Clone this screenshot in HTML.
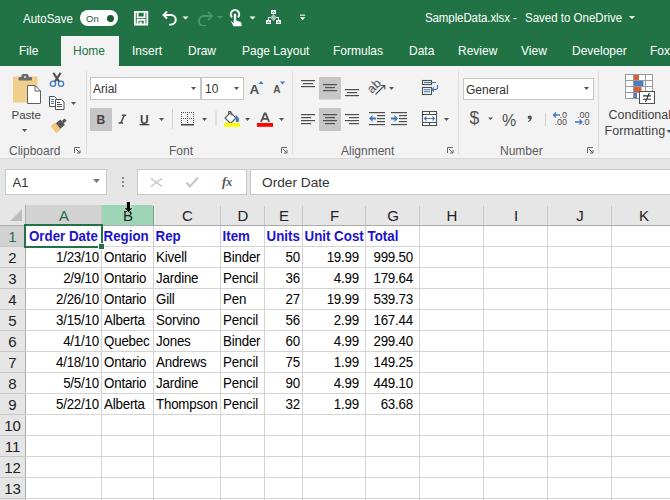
<!DOCTYPE html><html><head><meta charset="utf-8"><style>
*{margin:0;padding:0;box-sizing:border-box}
html,body{width:670px;height:500px;overflow:hidden;background:#fff;font-family:"Liberation Sans",sans-serif}
.a{position:absolute;white-space:nowrap}
#title{left:0;top:0;width:670px;height:66px;background:#217346}
.tw{color:#fff;font-size:12px;line-height:14px;transform:scaleY(1.1);transform-origin:0 3px}
.tab{color:#fff;font-size:12px;top:43px;line-height:14px;transform:scaleY(1.1);transform-origin:0 3px}
#ribbon{left:0;top:66px;width:670px;height:92px;background:#f3f3f3}
.rl{color:#5a5a5a;font-size:12px}
.cell{font-size:13.33px;color:#000;height:21px;line-height:21px;letter-spacing:-0.2px;transform:scaleY(1.1);transform-origin:0 4px}
.hdr{font-size:15px;color:#222;text-align:center}
</style></head><body>
<div id="title" class="a"></div>
<div class="a tw" style="left:23px;top:11px;font-size:11.5px">AutoSave</div>
<div class="a" style="left:80px;top:10px;width:38px;height:16px;border-radius:8px;background:#fff"></div>
<div class="a" style="left:86px;top:13px;font-size:9.5px;line-height:11px;color:#1d5a39">On</div>
<div class="a" style="left:107px;top:15px;width:7px;height:7px;border-radius:50%;background:#1d5a39"></div>
<svg class="a" style="left:134px;top:11px" width="15" height="15" viewBox="0 0 15 15"><path d="M0.9 0.9h12.4v12.6H0.9z M3.6 0.9v5.4h7V0.9 M3.6 13.5V8.8h7v4.7" fill="none" stroke="#fff" stroke-width="1.8"/><rect x="5.6" y="10.6" width="2.2" height="3" fill="#fff"/></svg>
<svg class="a" style="left:162px;top:10px" width="16" height="16" viewBox="0 0 16 16"><path d="M5 1.5L1.5 5 5 8.5 M1.8 5h7.2a4.8 4.8 0 0 1 0 9.6H7" fill="none" stroke="#fff" stroke-width="1.9"/></svg>
<svg class="a" style="left:182px;top:15px" width="7" height="5"><path d="M0.5 1.5h6L3.5 4.5z" fill="#fff"/></svg>
<svg class="a" style="left:196px;top:9px" width="18" height="17" viewBox="0 0 18 17"><path d="M12 3l4 4-4 4 M16 7H8a5 5 0 0 0 0 10h2" fill="none" stroke="#4e9670" stroke-width="1.8"/></svg>
<svg class="a" style="left:217px;top:15px" width="7" height="5"><path d="M0 1h6L3 4z" fill="#4e9670"/></svg>
<svg class="a" style="left:229px;top:8px" width="14" height="20" viewBox="0 0 14 20"><path d="M3 9.2A4.2 4.2 0 1 1 9 9.2" fill="none" stroke="#fff" stroke-width="2"/><rect x="4.8" y="5.8" width="2.4" height="8" fill="#fff"/><path d="M1.5 12.8L4.8 15.2V12.5h2.4l4.3 1.5q1 0.5 1 1.5V18.2H4.6z" fill="#fff"/></svg>
<svg class="a" style="left:249px;top:15px" width="7" height="5"><path d="M0.5 1.5h6L3.5 4.5z" fill="#fff"/></svg>
<svg class="a" style="left:265px;top:9px" width="17" height="16" viewBox="265 9 17 16"><rect x="271" y="10" width="5" height="4" fill="#fff"/><rect x="266" y="20" width="5" height="4" fill="#fff"/><rect x="276" y="20" width="5" height="4" fill="#fff"/><path d="M272.3 13l1.2-1.4 1.2 1.4 M267.3 23l1.2-1.4 1.2 1.4 M277.3 23l1.2-1.4 1.2 1.4" stroke="#217346" stroke-width="0.9" fill="none"/><path d="M273.5 14l3.2 3.6-3.2 3.6-3.2-3.6z" fill="#fff" fill-opacity="0.6"/><path d="M268.5 20v-2.5h2.2 M278.5 20v-2.5h-2.2" stroke="#fff" stroke-width="1" fill="none"/></svg>
<svg class="a" style="left:299px;top:14px" width="8" height="8" viewBox="299 14 8 8"><rect x="300" y="14.6" width="5.2" height="1.1" fill="#fff"/><path d="M300 17.2h5.2l-2.6 3z" fill="#fff"/></svg>
<div class="a tw" style="left:425px;top:10px;font-size:11.5px;letter-spacing:-0.1px">SampleData.xlsx</div>
<div class="a tw" style="left:513px;top:10px;font-size:11.5px">-</div>
<div class="a tw" style="left:525px;top:10px;font-size:11.5px">Saved to OneDrive</div>
<svg class="a" style="left:629px;top:16px" width="6" height="4"><path d="M0 0h6L3 3z" fill="#fff"/></svg>
<div class="a" style="left:61px;top:36px;width:58px;height:30px;background:#f3f3f3"></div>
<div class="a tab" style="left:19px;color:#fff">File</div>
<div class="a tab" style="left:73px;color:#217346">Home</div>
<div class="a tab" style="left:132px;color:#fff">Insert</div>
<div class="a tab" style="left:188px;color:#fff">Draw</div>
<div class="a tab" style="left:242px;color:#fff">Page Layout</div>
<div class="a tab" style="left:333px;color:#fff">Formulas</div>
<div class="a tab" style="left:409px;color:#fff">Data</div>
<div class="a tab" style="left:458px;color:#fff">Review</div>
<div class="a tab" style="left:521px;color:#fff">View</div>
<div class="a tab" style="left:572px;color:#fff">Developer</div>
<div class="a tab" style="left:650px;color:#fff">Fox</div>
<div id="ribbon" class="a"></div>
<svg class="a" style="left:0;top:0" width="670" height="500" viewBox="0 0 670 500"><rect x="13" y="76.5" width="24.5" height="26" fill="#f0cf8c"/><rect x="18.5" y="77" width="13.5" height="3.5" rx="1" fill="#6b6b6b"/><path d="M21.5 77.5v-2a1.5 1.5 0 0 1 1.5-1.5h4a1.5 1.5 0 0 1 1.5 1.5v2z" fill="#6b6b6b"/><circle cx="25" cy="77" r="1" fill="#f3f3f3"/><path d="M27.5 85.5h7.5l5.5 5.5v12.5h-13z" fill="#fff" stroke="#606060" stroke-width="1"/><path d="M35 85.5v5.5h5.5" fill="none" stroke="#606060" stroke-width="1"/><path d="M53.3 72.8l5.8 8.8 M60.7 72.8l-5.8 8.8" stroke="#505050" stroke-width="2.1" fill="none"/><circle cx="53" cy="83.8" r="2.6" fill="none" stroke="#3f78c0" stroke-width="1.3"/><circle cx="61" cy="83.8" r="2.6" fill="none" stroke="#3f78c0" stroke-width="1.3"/><path d="M49.5 96.5h5l2 2v8h-7z" fill="#fff" stroke="#505050" stroke-width="1"/><path d="M51 99.5h3 M51 101.5h3 M51 103.5h3" stroke="#3f78c0" stroke-width="1"/><path d="M55.5 99.5h6l2.5 2.5v7.5h-8.5z" fill="#fff" stroke="#505050" stroke-width="1"/><path d="M57 102.5h3 M57 104.5h5 M57 106.5h5" stroke="#505050" stroke-width="1"/><path d="M71 102h5l-2.5 3z" fill="#555"/><g transform="translate(57.3 126.6) rotate(-40)"><rect x="-5" y="-4.5" width="6" height="9" fill="#f0c878"/><rect x="1" y="-3.5" width="6" height="7" fill="#555"/><rect x="7" y="-1.5" width="4" height="3" fill="#555"/></g><path d="M22 129h5l-2.5 3z" fill="#555"/><rect x="90.5" y="77.5" width="110" height="22" fill="#fff" stroke="#c6c6c6"/><rect x="201.5" y="77.5" width="42" height="22" fill="#fff" stroke="#c6c6c6"/><path d="M191 87h5l-2.5 3z M234 87h5l-2.5 3z" fill="#555"/><path d="M258.5 84h5l-2.5-3z" fill="#3f78c0"/><path d="M280 81.5h5l-2.5 3z" fill="#3f78c0"/><rect x="90" y="108" width="22" height="23" fill="#c6c6c6"/><path d="M159 118h5l-2.5 3z M202 118h5l-2.5 3z M245 118h5l-2.5 3z M279 118h5l-2.5 3z" fill="#555"/><rect x="139.5" y="124" width="10" height="1.3" fill="#444"/><path d="M121.8 115.2h4.4 M118.6 122.9h4.4 M124.3 115.2l-3.4 7.7" stroke="#4a4a4a" stroke-width="1.5" fill="none"/><rect x="172" y="109" width="1" height="20" fill="#d0d0d0"/><rect x="215.5" y="111" width="1" height="15" fill="#d0d0d0"/><rect x="181" y="112" width="1" height="1" fill="#555"/><rect x="183" y="112" width="1" height="1" fill="#555"/><rect x="185" y="112" width="1" height="1" fill="#555"/><rect x="187" y="112" width="1" height="1" fill="#555"/><rect x="189" y="112" width="1" height="1" fill="#555"/><rect x="191" y="112" width="1" height="1" fill="#555"/><rect x="193" y="112" width="1" height="1" fill="#555"/><rect x="181" y="118" width="1" height="1" fill="#555"/><rect x="183" y="118" width="1" height="1" fill="#555"/><rect x="185" y="118" width="1" height="1" fill="#555"/><rect x="187" y="118" width="1" height="1" fill="#555"/><rect x="189" y="118" width="1" height="1" fill="#555"/><rect x="191" y="118" width="1" height="1" fill="#555"/><rect x="193" y="118" width="1" height="1" fill="#555"/><rect x="181" y="114" width="1" height="1" fill="#555"/><rect x="187" y="114" width="1" height="1" fill="#555"/><rect x="193" y="114" width="1" height="1" fill="#555"/><rect x="181" y="116" width="1" height="1" fill="#555"/><rect x="187" y="116" width="1" height="1" fill="#555"/><rect x="193" y="116" width="1" height="1" fill="#555"/><rect x="181" y="120" width="1" height="1" fill="#555"/><rect x="187" y="120" width="1" height="1" fill="#555"/><rect x="193" y="120" width="1" height="1" fill="#555"/><rect x="181" y="122" width="1" height="1" fill="#555"/><rect x="187" y="122" width="1" height="1" fill="#555"/><rect x="193" y="122" width="1" height="1" fill="#555"/><rect x="181" y="124" width="13" height="1.5" fill="#444"/><path d="M230.5 112.5l5.5 5.5-5.5 5.5-5.5-5.5z" fill="#fff" stroke="#555" stroke-width="1.1"/><path d="M228.5 114.5v-3h2.5v4" fill="none" stroke="#555" stroke-width="1"/><path d="M235.8 115c2 1.2 3.4 3 3.2 5.2-0.2 1.6-1.2 2.2-2.2 2-1-0.3-1.2-1.5-1-3z" fill="#3f78c0"/><rect x="224" y="123" width="16" height="3.8" fill="#ffff00"/><rect x="257" y="123" width="16" height="3.8" fill="#ff0000"/><path d="M261 122l3.6-8.6h1l3.6 8.6 M262.6 118.8h5" fill="none" stroke="#505050" stroke-width="1.8"/><rect x="319" y="77" width="22" height="22.5" fill="#c6c6c6"/><rect x="319" y="108" width="22" height="23" fill="#c6c6c6"/><rect x="301" y="80" width="14" height="1.2" fill="#505050"/><rect x="301" y="86" width="14" height="1.2" fill="#505050"/><rect x="303" y="83" width="10" height="1.2" fill="#505050"/><rect x="323" y="84" width="14" height="1.2" fill="#505050"/><rect x="323" y="90" width="14" height="1.2" fill="#505050"/><rect x="325" y="87" width="10" height="1.2" fill="#505050"/><rect x="345" y="89" width="14" height="1.2" fill="#505050"/><rect x="345" y="95" width="14" height="1.2" fill="#505050"/><rect x="347" y="92" width="10" height="1.2" fill="#505050"/><rect x="301" y="114" width="14" height="1.2" fill="#505050"/><rect x="301" y="120" width="14" height="1.2" fill="#505050"/><rect x="301" y="117" width="10" height="1.2" fill="#505050"/><rect x="301" y="123" width="10" height="1.2" fill="#505050"/><rect x="323" y="114" width="14" height="1.2" fill="#505050"/><rect x="323" y="120" width="14" height="1.2" fill="#505050"/><rect x="325" y="117" width="10" height="1.2" fill="#505050"/><rect x="325" y="123" width="10" height="1.2" fill="#505050"/><rect x="345" y="114" width="14" height="1.2" fill="#505050"/><rect x="345" y="120" width="14" height="1.2" fill="#505050"/><rect x="349" y="117" width="10" height="1.2" fill="#505050"/><rect x="349" y="123" width="10" height="1.2" fill="#505050"/><text x="0" y="0" transform="translate(372 94) rotate(-45)" font-family="Liberation Sans" font-size="12.5" fill="#505050">ab</text><path d="M375.5 94.5l9-9 M381 85.5h3.8v3.8" fill="none" stroke="#505050" stroke-width="1.2"/><path d="M389 87h5l-2.5 3z" fill="#555"/><rect x="422.5" y="80.5" width="9" height="4" fill="none" stroke="#505050" stroke-width="1.1"/><path d="M424 82.5h12" stroke="#3f78c0" stroke-width="1.1"/><rect x="422.5" y="87.5" width="9" height="7" fill="none" stroke="#505050" stroke-width="1.1"/><path d="M424 89.8h6 M424 91.8h6" stroke="#3f78c0" stroke-width="1.1"/><path d="M437.5 85v2.5a2 2 0 0 1-2 2h-3 M434 87.5l-2 2 2 2" fill="none" stroke="#3f78c0" stroke-width="1.2"/><rect x="369" y="112" width="16" height="1.2" fill="#505050"/><rect x="369" y="124" width="16" height="1.2" fill="#505050"/><rect x="377" y="115" width="8" height="1.2" fill="#505050"/><rect x="377" y="118" width="8" height="1.2" fill="#505050"/><rect x="377" y="121" width="8" height="1.2" fill="#505050"/><rect x="391" y="112" width="16" height="1.2" fill="#505050"/><rect x="391" y="124" width="16" height="1.2" fill="#505050"/><rect x="399" y="115" width="8" height="1.2" fill="#505050"/><rect x="399" y="118" width="8" height="1.2" fill="#505050"/><rect x="399" y="121" width="8" height="1.2" fill="#505050"/><path d="M369 118.6l3.5-3.5v2.5h3.5v2h-3.5v2.5z" fill="#3f78c0"/><path d="M398 118.6l-3.5-3.5v2.5h-3.5v2h3.5v2.5z" fill="#3f78c0"/><rect x="422.5" y="111.5" width="14" height="14" fill="#fff" stroke="#505050" stroke-width="1.1"/><path d="M422.5 114.5h14 M422.5 122.5h14 M429.5 111.5v3 M429.5 122.5v3" stroke="#505050" stroke-width="1.1"/><path d="M424.5 118.5h10 M426.5 116.5l-2 2 2 2 M432.5 116.5l2 2-2 2" fill="none" stroke="#3f78c0" stroke-width="1.1"/><path d="M444 118h5l-2.5 3z" fill="#555"/><rect x="463.5" y="78.5" width="130" height="21" fill="#fff" stroke="#c6c6c6"/><path d="M584 87h5l-2.5 3z M488 117.5h5l-2.5 2.5z" fill="#555"/><rect x="545" y="113" width="1" height="13" fill="#d0d0d0"/><path d="M529.5 115.5a2.2 2.2 0 0 1 2.3 2.3c0 1.8-1.2 3.3-3.6 4.2l-0.4-0.8c1.2-0.6 1.8-1.3 1.9-2.2a1.8 1.8 0 0 1-2-1.7 1.9 1.9 0 0 1 1.8-1.8z" fill="#505050"/><path d="M553 115h7 M556 112.5l-2.5 2.5 2.5 2.5" fill="none" stroke="#3f78c0" stroke-width="1.3"/><path d="M575 122h7 M579.5 119.5l2.5 2.5-2.5 2.5" fill="none" stroke="#3f78c0" stroke-width="1.3"/><rect x="625.5" y="74.5" width="27" height="24" fill="#fff" stroke="#999"/><path d="M633.5 74.5v24 M645.5 74.5v24 M625.5 80.5h27 M625.5 86.5h27 M625.5 92.5h27" stroke="#999"/><rect x="634" y="75" width="5" height="5" fill="#d9603b"/><rect x="634" y="81" width="9.5" height="5" fill="#4a7fc1"/><rect x="634" y="87" width="7.5" height="5" fill="#d9603b"/><rect x="634" y="93" width="3" height="5" fill="#4a7fc1"/><rect x="639.5" y="91.5" width="15" height="12" fill="#fff" stroke="#505050"/><path d="M643 95.8h8 M643 99.2h8 M649.3 93l-3.8 9" stroke="#333" stroke-width="1.15" fill="none"/><path d="M666.5 130h5l-2.5 3z" fill="#555"/></svg><div class="a" style="left:11.5px;top:109.5px;font-size:11.5px;color:#444;line-height:1;">Paste</div><div class="a" style="left:93px;top:83px;font-size:12px;color:#333;line-height:1;">Arial</div><div class="a" style="left:205px;top:83px;font-size:12px;color:#333;line-height:1;">10</div><div class="a" style="left:249.5px;top:82.5px;font-size:13.5px;color:#505050;line-height:1;font-weight:bold;-webkit-text-stroke:0px">A</div><div class="a" style="left:273.3px;top:85.3px;font-size:10px;color:#505050;line-height:1;font-weight:bold">A</div><div class="a" style="left:96.5px;top:113.5px;font-size:12px;color:#444;line-height:1;font-weight:bold">B</div><div class="a" style="left:140px;top:113.5px;font-size:12px;color:#444;line-height:1;font-weight:bold">U</div><div class="a" style="left:466px;top:83.5px;font-size:12px;color:#333;line-height:1;">General</div><div class="a" style="left:469.5px;top:109.5px;font-size:17.5px;color:#505050;line-height:1;">$</div><div class="a" style="left:502px;top:112.5px;font-size:16px;color:#505050;line-height:1;">%</div><div class="a" style="left:559.5px;top:111px;font-size:9px;color:#505050;line-height:1;">.0</div><div class="a" style="left:554.5px;top:118px;font-size:9px;color:#505050;line-height:1;">.00</div><div class="a" style="left:577px;top:111px;font-size:9px;color:#505050;line-height:1;">.00</div><div class="a" style="left:582px;top:118px;font-size:9px;color:#505050;line-height:1;">.0</div><div class="a" style="left:608.5px;top:108.5px;font-size:12.5px;color:#444;line-height:1;">Conditional</div><div class="a" style="left:604.5px;top:124.5px;font-size:12.5px;color:#444;line-height:1;letter-spacing:0.1px">Formatting</div>
<div class="a" style="left:0;top:158px;width:670px;height:1px;background:#d8d8d8"></div>
<div class="a" style="left:86px;top:71px;width:1px;height:83px;background:#dcdcdc"></div>
<div class="a" style="left:292px;top:71px;width:1px;height:83px;background:#dcdcdc"></div>
<div class="a" style="left:458px;top:71px;width:1px;height:83px;background:#dcdcdc"></div>
<div class="a" style="left:598px;top:71px;width:1px;height:83px;background:#dcdcdc"></div>
<div class="a rl" style="left:9px;top:144px">Clipboard</div>
<div class="a rl" style="left:169px;top:144px">Font</div>
<div class="a rl" style="left:341px;top:144px">Alignment</div>
<div class="a rl" style="left:500px;top:144px">Number</div>
<svg class="a" style="left:74px;top:147px" width="7" height="7" viewBox="0 0 7 7"><path d="M0.5 6V0.5H6 M2 2l4 4 M3 6h3V3" stroke="#666" stroke-width="1" fill="none"/></svg>
<svg class="a" style="left:281px;top:147px" width="7" height="7" viewBox="0 0 7 7"><path d="M0.5 6V0.5H6 M2 2l4 4 M3 6h3V3" stroke="#666" stroke-width="1" fill="none"/></svg>
<svg class="a" style="left:447px;top:147px" width="7" height="7" viewBox="0 0 7 7"><path d="M0.5 6V0.5H6 M2 2l4 4 M3 6h3V3" stroke="#666" stroke-width="1" fill="none"/></svg>
<svg class="a" style="left:587px;top:147px" width="7" height="7" viewBox="0 0 7 7"><path d="M0.5 6V0.5H6 M2 2l4 4 M3 6h3V3" stroke="#666" stroke-width="1" fill="none"/></svg>
<div class="a" style="left:0;top:159px;width:670px;height:46px;background:#e6e6e6"></div>
<div class="a" style="left:5px;top:169px;width:102px;height:26px;background:#fff;border:1px solid #c8c8c8"></div>
<div class="a" style="left:12.5px;top:175px;font-size:13px;color:#333">A1</div>
<svg class="a" style="left:93px;top:179px" width="8" height="5"><path d="M0 0h7L3.5 4z" fill="#777"/></svg>
<div class="a" style="left:137px;top:169px;width:110px;height:26px;background:#fff;border:1px solid #c8c8c8"></div>
<div class="a" style="left:250px;top:169px;width:430px;height:26px;background:#fff;border:1px solid #c8c8c8"></div>
<div class="a" style="left:262px;top:174.5px;font-size:13.7px;color:#333">Order Date</div>
<svg class="a" style="left:0;top:160px" width="260" height="40" viewBox="0 160 260 40"><path d="M110.5 172v13" stroke="#d8d8d8" stroke-dasharray="1 1"/><rect x="122" y="177" width="2" height="2" fill="#888"/><rect x="122" y="181" width="2" height="2" fill="#888"/><rect x="122" y="185" width="2" height="2" fill="#888"/><path d="M151 178.5l11 8 M162 178.5l-11 8" stroke="#c4c4c4" stroke-width="1.5"/><path d="M186.5 182.5l3.5 4 8-9" fill="none" stroke="#c4c4c4" stroke-width="2"/></svg>
<div class="a" style="left:222px;top:174px;font-size:13px;color:#555;font-family:'Liberation Serif';font-style:italic;font-weight:bold">f<span style="font-size:12px;letter-spacing:-0.5px">x</span></div>
<div class="a" style="left:0;top:205px;width:670px;height:20px;background:#e6e6e6"></div>
<div class="a" style="left:0;top:225px;width:25px;height:275px;background:#e6e6e6"></div>
<div class="a" style="left:25px;top:205px;width:76px;height:20px;background:#d2d2d2"></div>
<div class="a" style="left:101px;top:205px;width:52px;height:20px;background:#9fd5b7"></div>
<div class="a" style="left:0;top:225px;width:25px;height:21px;background:#d2d2d2"></div>
<svg class="a" style="left:10px;top:209px" width="13" height="13"><path d="M12 0V12H0z" fill="#bdbdbd"/></svg>
<div class="a" style="left:101px;top:225px;width:1px;height:275px;background:#d4d4d4"></div>
<div class="a" style="left:101px;top:206px;width:1px;height:19px;background:#c6c6c6"></div>
<div class="a" style="left:153px;top:225px;width:1px;height:275px;background:#d4d4d4"></div>
<div class="a" style="left:153px;top:206px;width:1px;height:19px;background:#c6c6c6"></div>
<div class="a" style="left:220px;top:225px;width:1px;height:275px;background:#d4d4d4"></div>
<div class="a" style="left:220px;top:206px;width:1px;height:19px;background:#c6c6c6"></div>
<div class="a" style="left:264px;top:225px;width:1px;height:275px;background:#d4d4d4"></div>
<div class="a" style="left:264px;top:206px;width:1px;height:19px;background:#c6c6c6"></div>
<div class="a" style="left:302px;top:225px;width:1px;height:275px;background:#d4d4d4"></div>
<div class="a" style="left:302px;top:206px;width:1px;height:19px;background:#c6c6c6"></div>
<div class="a" style="left:365px;top:225px;width:1px;height:275px;background:#d4d4d4"></div>
<div class="a" style="left:365px;top:206px;width:1px;height:19px;background:#c6c6c6"></div>
<div class="a" style="left:419px;top:225px;width:1px;height:275px;background:#d4d4d4"></div>
<div class="a" style="left:419px;top:206px;width:1px;height:19px;background:#c6c6c6"></div>
<div class="a" style="left:483px;top:225px;width:1px;height:275px;background:#d4d4d4"></div>
<div class="a" style="left:483px;top:206px;width:1px;height:19px;background:#c6c6c6"></div>
<div class="a" style="left:547px;top:225px;width:1px;height:275px;background:#d4d4d4"></div>
<div class="a" style="left:547px;top:206px;width:1px;height:19px;background:#c6c6c6"></div>
<div class="a" style="left:611px;top:225px;width:1px;height:275px;background:#d4d4d4"></div>
<div class="a" style="left:611px;top:206px;width:1px;height:19px;background:#c6c6c6"></div>
<div class="a" style="left:25px;top:205px;width:1px;height:295px;background:#ababab"></div>
<div class="a" style="left:25px;top:246px;width:645px;height:1px;background:#d4d4d4"></div>
<div class="a" style="left:0;top:246px;width:25px;height:1px;background:#c6c6c6"></div>
<div class="a" style="left:25px;top:267px;width:645px;height:1px;background:#d4d4d4"></div>
<div class="a" style="left:0;top:267px;width:25px;height:1px;background:#c6c6c6"></div>
<div class="a" style="left:25px;top:288px;width:645px;height:1px;background:#d4d4d4"></div>
<div class="a" style="left:0;top:288px;width:25px;height:1px;background:#c6c6c6"></div>
<div class="a" style="left:25px;top:309px;width:645px;height:1px;background:#d4d4d4"></div>
<div class="a" style="left:0;top:309px;width:25px;height:1px;background:#c6c6c6"></div>
<div class="a" style="left:25px;top:330px;width:645px;height:1px;background:#d4d4d4"></div>
<div class="a" style="left:0;top:330px;width:25px;height:1px;background:#c6c6c6"></div>
<div class="a" style="left:25px;top:351px;width:645px;height:1px;background:#d4d4d4"></div>
<div class="a" style="left:0;top:351px;width:25px;height:1px;background:#c6c6c6"></div>
<div class="a" style="left:25px;top:372px;width:645px;height:1px;background:#d4d4d4"></div>
<div class="a" style="left:0;top:372px;width:25px;height:1px;background:#c6c6c6"></div>
<div class="a" style="left:25px;top:393px;width:645px;height:1px;background:#d4d4d4"></div>
<div class="a" style="left:0;top:393px;width:25px;height:1px;background:#c6c6c6"></div>
<div class="a" style="left:25px;top:414px;width:645px;height:1px;background:#d4d4d4"></div>
<div class="a" style="left:0;top:414px;width:25px;height:1px;background:#c6c6c6"></div>
<div class="a" style="left:25px;top:435px;width:645px;height:1px;background:#d4d4d4"></div>
<div class="a" style="left:0;top:435px;width:25px;height:1px;background:#c6c6c6"></div>
<div class="a" style="left:25px;top:456px;width:645px;height:1px;background:#d4d4d4"></div>
<div class="a" style="left:0;top:456px;width:25px;height:1px;background:#c6c6c6"></div>
<div class="a" style="left:25px;top:477px;width:645px;height:1px;background:#d4d4d4"></div>
<div class="a" style="left:0;top:477px;width:25px;height:1px;background:#c6c6c6"></div>
<div class="a" style="left:25px;top:498px;width:645px;height:1px;background:#d4d4d4"></div>
<div class="a" style="left:0;top:498px;width:25px;height:1px;background:#c6c6c6"></div>
<div class="a" style="left:0;top:225px;width:670px;height:1px;background:#ababab"></div>
<div class="a" style="left:153px;top:206px;width:1px;height:19px;background:#7d9a8a"></div>
<div class="a" style="left:154px;top:206px;width:1px;height:19px;background:#eef6f2"></div>
<div class="a hdr" style="left:26px;top:206px;width:76px;height:20px;line-height:20px;color:#217346">A</div>
<div class="a hdr" style="left:102px;top:206px;width:52px;height:20px;line-height:20px;color:#222">B</div>
<div class="a hdr" style="left:154px;top:206px;width:67px;height:20px;line-height:20px;color:#222">C</div>
<div class="a hdr" style="left:221px;top:206px;width:44px;height:20px;line-height:20px;color:#222">D</div>
<div class="a hdr" style="left:265px;top:206px;width:38px;height:20px;line-height:20px;color:#222">E</div>
<div class="a hdr" style="left:303px;top:206px;width:63px;height:20px;line-height:20px;color:#222">F</div>
<div class="a hdr" style="left:366px;top:206px;width:54px;height:20px;line-height:20px;color:#222">G</div>
<div class="a hdr" style="left:420px;top:206px;width:64px;height:20px;line-height:20px;color:#222">H</div>
<div class="a hdr" style="left:484px;top:206px;width:64px;height:20px;line-height:20px;color:#222">I</div>
<div class="a hdr" style="left:548px;top:206px;width:64px;height:20px;line-height:20px;color:#222">J</div>
<div class="a hdr" style="left:612px;top:206px;width:64px;height:20px;line-height:20px;color:#222">K</div>
<div class="a hdr" style="left:0;top:226px;width:25px;height:21px;line-height:21px;color:#217346">1</div>
<div class="a hdr" style="left:0;top:247px;width:25px;height:21px;line-height:21px;color:#222">2</div>
<div class="a hdr" style="left:0;top:268px;width:25px;height:21px;line-height:21px;color:#222">3</div>
<div class="a hdr" style="left:0;top:289px;width:25px;height:21px;line-height:21px;color:#222">4</div>
<div class="a hdr" style="left:0;top:310px;width:25px;height:21px;line-height:21px;color:#222">5</div>
<div class="a hdr" style="left:0;top:331px;width:25px;height:21px;line-height:21px;color:#222">6</div>
<div class="a hdr" style="left:0;top:352px;width:25px;height:21px;line-height:21px;color:#222">7</div>
<div class="a hdr" style="left:0;top:373px;width:25px;height:21px;line-height:21px;color:#222">8</div>
<div class="a hdr" style="left:0;top:394px;width:25px;height:21px;line-height:21px;color:#222">9</div>
<div class="a hdr" style="left:0;top:415px;width:25px;height:21px;line-height:21px;color:#222">10</div>
<div class="a hdr" style="left:0;top:436px;width:25px;height:21px;line-height:21px;color:#222">11</div>
<div class="a hdr" style="left:0;top:457px;width:25px;height:21px;line-height:21px;color:#222">12</div>
<div class="a hdr" style="left:0;top:478px;width:25px;height:21px;line-height:21px;color:#222">13</div>
<div class="a cell" style="left:29px;top:225px;font-weight:bold;letter-spacing:0;color:#1c12cc">Order Date</div>
<div class="a cell" style="left:103.5px;top:225px;font-weight:bold;letter-spacing:0;color:#1c12cc">Region</div>
<div class="a cell" style="left:155.5px;top:225px;font-weight:bold;letter-spacing:0;color:#1c12cc">Rep</div>
<div class="a cell" style="left:222.5px;top:225px;font-weight:bold;letter-spacing:0;color:#1c12cc">Item</div>
<div class="a cell" style="left:266.5px;top:225px;font-weight:bold;letter-spacing:0;color:#1c12cc">Units</div>
<div class="a cell" style="left:304.5px;top:225px;font-weight:bold;letter-spacing:0;color:#1c12cc">Unit Cost</div>
<div class="a cell" style="left:367.5px;top:225px;font-weight:bold;letter-spacing:0;color:#1c12cc">Total</div>
<div class="a cell" style="left:25px;width:74px;top:246px;text-align:right">1/23/10</div>
<div class="a cell" style="left:104px;top:246px">Ontario</div>
<div class="a cell" style="left:156px;top:246px">Kivell</div>
<div class="a cell" style="left:223px;top:246px">Binder</div>
<div class="a cell" style="left:264px;width:36px;top:246px;text-align:right">50</div>
<div class="a cell" style="left:302px;width:57px;top:246px;text-align:right">19.99</div>
<div class="a cell" style="left:365px;width:48px;top:246px;text-align:right">999.50</div>
<div class="a cell" style="left:25px;width:74px;top:267px;text-align:right">2/9/10</div>
<div class="a cell" style="left:104px;top:267px">Ontario</div>
<div class="a cell" style="left:156px;top:267px">Jardine</div>
<div class="a cell" style="left:223px;top:267px">Pencil</div>
<div class="a cell" style="left:264px;width:36px;top:267px;text-align:right">36</div>
<div class="a cell" style="left:302px;width:57px;top:267px;text-align:right">4.99</div>
<div class="a cell" style="left:365px;width:48px;top:267px;text-align:right">179.64</div>
<div class="a cell" style="left:25px;width:74px;top:288px;text-align:right">2/26/10</div>
<div class="a cell" style="left:104px;top:288px">Ontario</div>
<div class="a cell" style="left:156px;top:288px">Gill</div>
<div class="a cell" style="left:223px;top:288px">Pen</div>
<div class="a cell" style="left:264px;width:36px;top:288px;text-align:right">27</div>
<div class="a cell" style="left:302px;width:57px;top:288px;text-align:right">19.99</div>
<div class="a cell" style="left:365px;width:48px;top:288px;text-align:right">539.73</div>
<div class="a cell" style="left:25px;width:74px;top:309px;text-align:right">3/15/10</div>
<div class="a cell" style="left:104px;top:309px">Alberta</div>
<div class="a cell" style="left:156px;top:309px">Sorvino</div>
<div class="a cell" style="left:223px;top:309px">Pencil</div>
<div class="a cell" style="left:264px;width:36px;top:309px;text-align:right">56</div>
<div class="a cell" style="left:302px;width:57px;top:309px;text-align:right">2.99</div>
<div class="a cell" style="left:365px;width:48px;top:309px;text-align:right">167.44</div>
<div class="a cell" style="left:25px;width:74px;top:330px;text-align:right">4/1/10</div>
<div class="a cell" style="left:104px;top:330px">Quebec</div>
<div class="a cell" style="left:156px;top:330px">Jones</div>
<div class="a cell" style="left:223px;top:330px">Binder</div>
<div class="a cell" style="left:264px;width:36px;top:330px;text-align:right">60</div>
<div class="a cell" style="left:302px;width:57px;top:330px;text-align:right">4.99</div>
<div class="a cell" style="left:365px;width:48px;top:330px;text-align:right">299.40</div>
<div class="a cell" style="left:25px;width:74px;top:351px;text-align:right">4/18/10</div>
<div class="a cell" style="left:104px;top:351px">Ontario</div>
<div class="a cell" style="left:156px;top:351px">Andrews</div>
<div class="a cell" style="left:223px;top:351px">Pencil</div>
<div class="a cell" style="left:264px;width:36px;top:351px;text-align:right">75</div>
<div class="a cell" style="left:302px;width:57px;top:351px;text-align:right">1.99</div>
<div class="a cell" style="left:365px;width:48px;top:351px;text-align:right">149.25</div>
<div class="a cell" style="left:25px;width:74px;top:372px;text-align:right">5/5/10</div>
<div class="a cell" style="left:104px;top:372px">Ontario</div>
<div class="a cell" style="left:156px;top:372px">Jardine</div>
<div class="a cell" style="left:223px;top:372px">Pencil</div>
<div class="a cell" style="left:264px;width:36px;top:372px;text-align:right">90</div>
<div class="a cell" style="left:302px;width:57px;top:372px;text-align:right">4.99</div>
<div class="a cell" style="left:365px;width:48px;top:372px;text-align:right">449.10</div>
<div class="a cell" style="left:25px;width:74px;top:393px;text-align:right">5/22/10</div>
<div class="a cell" style="left:104px;top:393px">Alberta</div>
<div class="a cell" style="left:156px;top:393px">Thompson</div>
<div class="a cell" style="left:223px;top:393px">Pencil</div>
<div class="a cell" style="left:264px;width:36px;top:393px;text-align:right">32</div>
<div class="a cell" style="left:302px;width:57px;top:393px;text-align:right">1.99</div>
<div class="a cell" style="left:365px;width:48px;top:393px;text-align:right">63.68</div>
<div class="a" style="left:24px;top:224px;width:79px;height:24px;border:2px solid #217346"></div>
<div class="a" style="left:99px;top:244px;width:5px;height:5px;background:#217346;outline:1px solid #fff"></div>
<svg class="a" style="left:122px;top:200px" width="13" height="15" viewBox="122 200 13 15"><path d="M126.8 202h3.2v6.3h2.2l-3.8 4-3.8-4h2.2z" fill="#000" stroke="#fff" stroke-width="0.9" paint-order="stroke"/></svg>
</body></html>
